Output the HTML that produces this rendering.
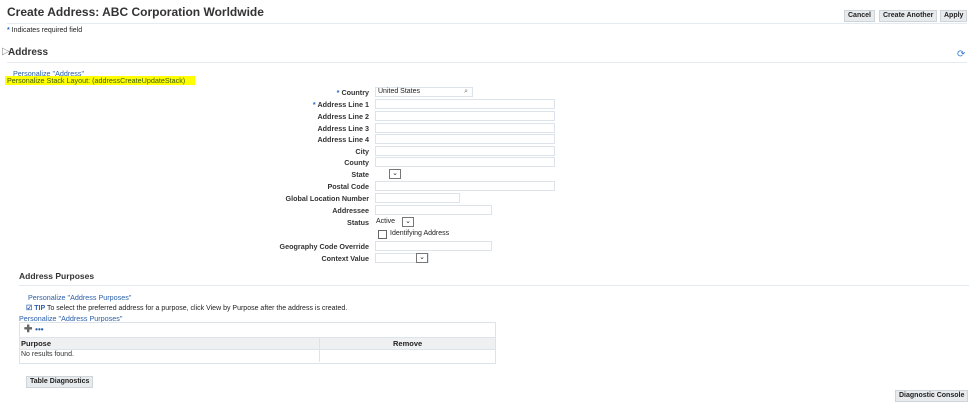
<!DOCTYPE html><html><head><style>
body{margin:0;width:980px;height:414px;background:#fff;font-family:"Liberation Sans",sans-serif;position:relative;overflow:hidden;color:#222}
.a{position:absolute;white-space:nowrap}
.lbl{position:absolute;right:611px;font-size:7.2px;font-weight:bold;color:#333;white-space:nowrap}
.inp{position:absolute;left:375px;height:8px;border:1px solid #dde3ea;background:#fff}
.btn{position:absolute;background:#e8ebee;border:1px solid #cfd4d8;font-size:7px;font-weight:bold;padding:1px 3px;height:8px;line-height:8px;color:#222}
.hr{position:absolute;height:1px;background:#e4eaf2}
.lnk{color:#2a5fa8;font-size:7.2px}
.sel{position:absolute;width:10px;height:8px;border:1px solid #777;font-size:7px;line-height:7px;text-align:center;background:#fff}
.star{color:#2a6cc0;font-weight:bold}
</style></head><body>
<div class="a" style="left:7px;top:5px;font-size:12px;font-weight:bold;color:#333">Create Address: ABC Corporation Worldwide</div>
<div class="hr" style="left:7px;top:23px;width:960px"></div>
<div class="btn" style="left:844px;top:10px">Cancel</div>
<div class="btn" style="left:879px;top:10px">Create Another</div>
<div class="btn" style="left:940px;top:10px">Apply</div>
<div class="a" style="left:7px;top:27px;font-size:7px"><span class="star">*</span> Indicates required field</div>
<div class="a" style="left:2px;top:46px;font-size:10px;color:#888">▷</div>
<div class="a" style="left:8px;top:47px;font-size:10px;font-weight:bold;color:#333">Address</div>
<div class="hr" style="left:7px;top:62px;width:960px"></div>
<div class="a" style="left:957px;top:49px;font-size:10px;color:#3a7fd0">⟳</div>
<div class="a lnk" style="left:13px;top:69px">Personalize "Address"</div>
<div class="a" style="left:5px;top:76px;width:188px;height:9px;background:#ffff00;font-size:7.2px;line-height:9px;color:#3a5a10;padding-left:2px">Personalize Stack Layout: (addressCreateUpdateStack)</div>

<div class="lbl" style="top:88px"><span class="star">*</span> Country</div>
<div class="inp" style="top:87px;font-size:7px;line-height:8px;padding-left:2px;width:94px">United States<span style="position:absolute;right:4px;color:#777">⌕</span></div>
<div class="lbl" style="top:100px"><span class="star">*</span> Address Line 1</div><div class="inp" style="top:99px;width:178px"></div>
<div class="lbl" style="top:112px">Address Line 2</div><div class="inp" style="top:111px;width:178px"></div>
<div class="lbl" style="top:124px">Address Line 3</div><div class="inp" style="top:123px;width:178px"></div>
<div class="lbl" style="top:135px">Address Line 4</div><div class="inp" style="top:134px;width:178px"></div>
<div class="lbl" style="top:147px">City</div><div class="inp" style="top:146px;width:178px"></div>
<div class="lbl" style="top:158px">County</div><div class="inp" style="top:157px;width:178px"></div>
<div class="lbl" style="top:170px">State</div><div class="sel" style="left:389px;top:169px">⌄</div>
<div class="lbl" style="top:182px">Postal Code</div><div class="inp" style="top:181px;width:178px"></div>
<div class="lbl" style="top:194px">Global Location Number</div><div class="inp" style="top:193px;width:83px"></div>
<div class="lbl" style="top:206px">Addressee</div><div class="inp" style="top:205px;width:115px"></div>
<div class="lbl" style="top:218px">Status</div><div class="a" style="left:376px;top:218px;font-size:7px">Active</div><div class="sel" style="left:402px;top:217px">⌄</div>
<div class="a" style="left:378px;top:230px;width:7px;height:7px;border:1px solid #666"></div><div class="a" style="left:390px;top:230px;font-size:7px">Identifying Address</div>
<div class="lbl" style="top:242px">Geography Code Override</div><div class="inp" style="top:241px;width:115px"></div>
<div class="lbl" style="top:254px">Context Value</div><div class="inp" style="top:253px;width:52px"></div><div class="sel" style="left:416px;top:253px">⌄</div>

<div class="a" style="left:19px;top:271px;font-size:8.5px;font-weight:bold;color:#333">Address Purposes</div>
<div class="hr" style="left:19px;top:285px;width:950px"></div>
<div class="a lnk" style="left:28px;top:293px">Personalize "Address Purposes"</div>
<div class="a" style="left:26px;top:304px;font-size:7px"><span style="color:#2a5fa8;font-weight:bold">☑ TIP</span> To select the preferred address for a purpose, click View by Purpose after the address is created.</div>
<div class="a lnk" style="left:19px;top:314px">Personalize "Address Purposes"</div>
<div class="a" style="left:19px;top:322px;width:475px;height:40px;border:1px solid #dde3ea"></div>
<div class="a" style="left:24px;top:324px;font-size:10px;color:#666;font-weight:bold">✚ <span style="color:#2a5fa8;font-size:8px">•••</span></div>
<div class="a" style="left:20px;top:337px;width:475px;height:11px;background:#eef0f2;border-top:1px solid #dde3ea;border-bottom:1px solid #dde3ea"></div>
<div class="a" style="left:21px;top:339px;font-size:7.5px;font-weight:bold">Purpose</div>
<div class="a" style="left:319px;top:337px;width:1px;height:25px;background:#dde3ea"></div>
<div class="a" style="left:393px;top:339px;font-size:7.5px;font-weight:bold">Remove</div>
<div class="a" style="left:21px;top:351px;font-size:7px;color:#333">No results found.</div>
<div class="btn" style="left:26px;top:376px">Table Diagnostics</div>
<div class="btn" style="left:895px;top:390px">Diagnostic Console</div>
</body></html>
